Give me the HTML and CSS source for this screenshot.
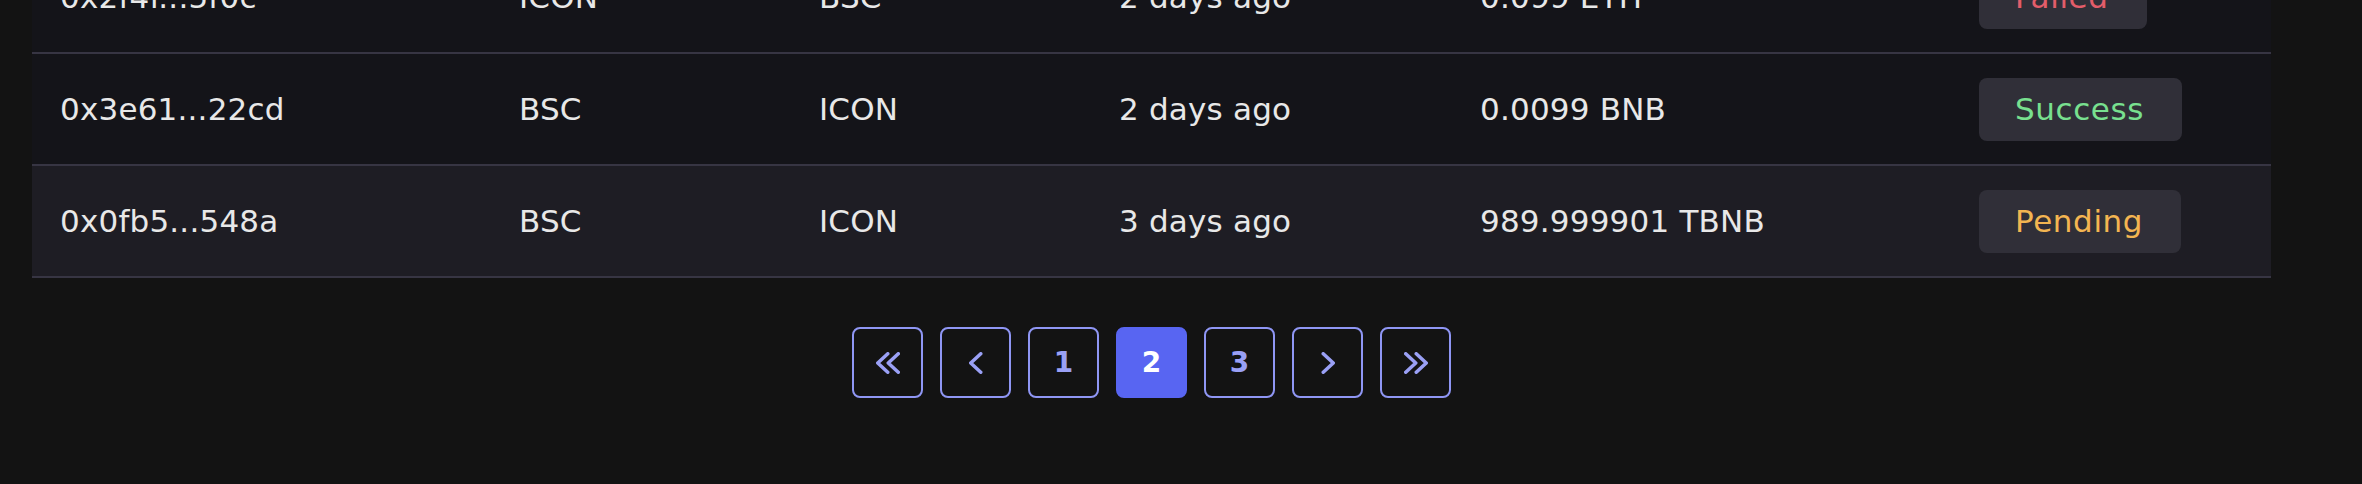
FILE: index.html
```html
<!DOCTYPE html>
<html lang="en">
<head>
<meta charset="utf-8">
<title>Transactions</title>
<link rel="stylesheet" href="styles.css">
</head>
<body>
<div class="wrap">
  <div class="table">
    <div class="row">
      <div class="cell">0x2f4f...5f0c</div>
      <div class="cell">ICON</div>
      <div class="cell">BSC</div>
      <div class="cell">2 days ago</div>
      <div class="cell">0.099 ETH</div>
      <div class="cell"><span class="badge failed">Failed</span></div>
    </div>
    <div class="row">
      <div class="cell">0x3e61...22cd</div>
      <div class="cell">BSC</div>
      <div class="cell">ICON</div>
      <div class="cell">2 days ago</div>
      <div class="cell">0.0099 BNB</div>
      <div class="cell"><span class="badge success">Success</span></div>
    </div>
    <div class="row alt">
      <div class="cell">0x0fb5...548a</div>
      <div class="cell">BSC</div>
      <div class="cell">ICON</div>
      <div class="cell">3 days ago</div>
      <div class="cell">989.999901 TBNB</div>
      <div class="cell"><span class="badge pending">Pending</span></div>
    </div>
  </div>
  <nav class="pager">
    <button class="pg" aria-label="First page">
      <svg width="24" height="22" viewBox="0 0 24 22"><path d="M11.75 1.75 L1.75 11 L11.75 20.25 M22.25 1.75 L12.25 11 L22.25 20.25"/></svg>
    </button>
    <button class="pg" aria-label="Previous page">
      <svg width="14" height="22" viewBox="0 0 14 22"><path d="M11.75 1.75 L1.75 11 L11.75 20.25"/></svg>
    </button>
    <button class="pg">1</button>
    <button class="pg active">2</button>
    <button class="pg">3</button>
    <button class="pg" aria-label="Next page">
      <svg width="14" height="22" viewBox="0 0 14 22"><path d="M2.25 1.75 L12.25 11 L2.25 20.25"/></svg>
    </button>
    <button class="pg" aria-label="Last page">
      <svg width="24" height="22" viewBox="0 0 24 22"><path d="M1.75 1.75 L11.75 11 L1.75 20.25 M12.25 1.75 L22.25 11 L12.25 20.25"/></svg>
    </button>
  </nav>
</div>
</body>
</html>
```

FILE: styles.css
```css
html, body {
  margin: 0;
  padding: 0;
  background: #131313;
}

body {
  font-family: "DejaVu Sans", "Noto Sans", sans-serif;
  color: #e8e8e8;
  overflow: hidden;
}

.wrap {
  width: 2239px;
  margin-left: 32px;
  margin-top: -58px;
}

.table {
  display: flex;
  flex-direction: column;
}

.row {
  display: grid;
  grid-template-columns: 459px 300px 300px 361px 499px 1fr;
  height: 110px;
  background: #141419;
  border-bottom: 2px solid #373543;
}

.row.alt {
  background: #1e1d24;
}

.cell {
  display: flex;
  align-items: center;
  padding-left: 28px;
  font-size: 31px;
  white-space: nowrap;
  letter-spacing: 0.2px;
}

.badge {
  display: inline-flex;
  align-items: center;
  height: 63px;
  padding: 0 38px 0 36px;
  background: #302f38;
  border-radius: 8px;
  font-size: 31px;
  letter-spacing: 0.6px;
}

.badge.success { color: #78e08f; }
.badge.pending { color: #f3b551; }
.badge.failed  { color: #e35d6a; }

.pager {
  display: flex;
  justify-content: center;
  gap: 17px;
  margin-top: 49px;
}

.pg {
  width: 71px;
  height: 71px;
  box-sizing: border-box;
  border: 2px solid #8f96f4;
  border-radius: 8px;
  background: transparent;
  color: #9aa0f5;
  font-family: "DejaVu Sans", sans-serif;
  font-size: 28px;
  font-weight: 700;
  display: flex;
  align-items: center;
  justify-content: center;
  padding: 0;
}

.pg.active {
  background: #5865f2;
  border-color: #5865f2;
  color: #ffffff;
}

.pg svg path {
  fill: none;
  stroke: #9aa0f5;
  stroke-width: 3.5;
  stroke-linecap: round;
  stroke-linejoin: round;
}
```
